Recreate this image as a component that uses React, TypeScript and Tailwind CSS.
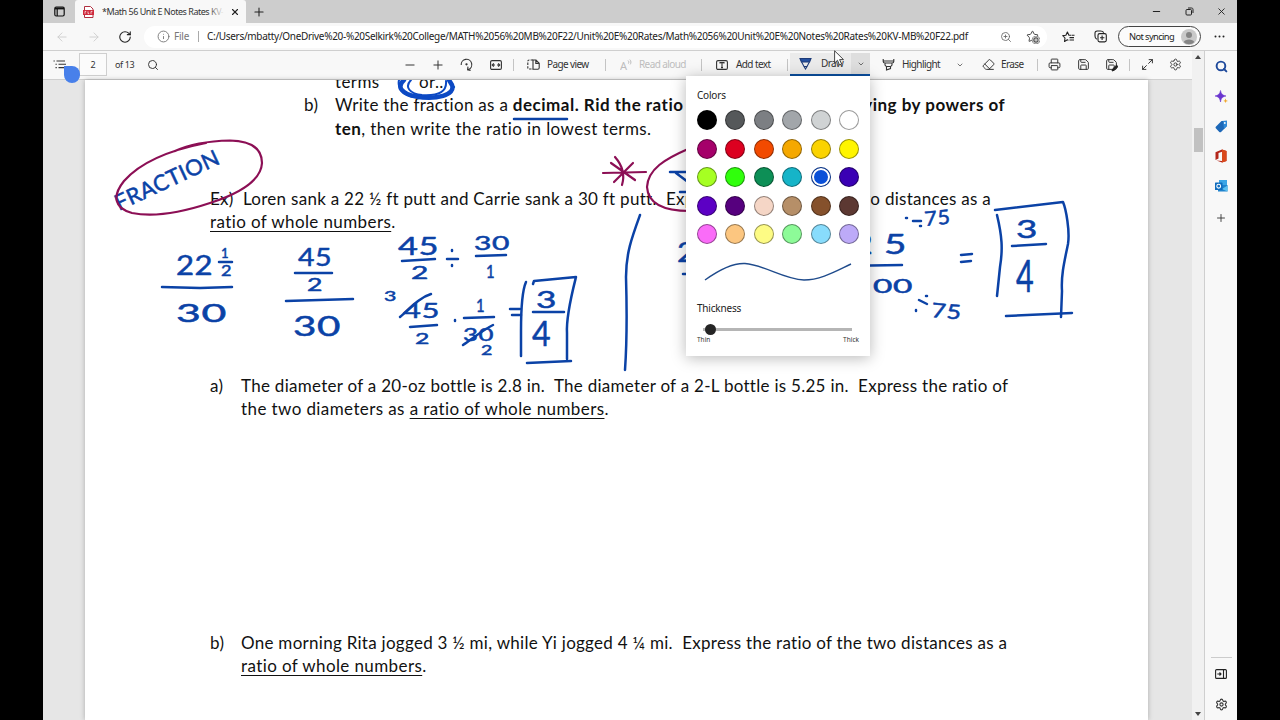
import { ReactNode } from "react";
import {
  ArrowLeft,
  ArrowRight,
  ChevronDown,
  CirclePlus,
  Eraser,
  Info,
  Maximize2,
  Minus,
  Plus,
  Printer,
  RotateCw,
  Save,
  Search,
  Settings,
  Star,
  X,
  ZoomIn,
} from "lucide-react";
import { clsx } from "clsx";

const UI = "font-['Noto_Sans','Open_Sans',sans-serif]";

const SWATCHES = [
  "bg-[#000000]", "bg-[#55585a]", "bg-[#7c7f83]", "bg-[#a2a6aa]", "bg-[#d0d3d4]", "bg-white",
  "bg-[#a5006a]", "bg-[#dc0020]", "bg-[#f24a00]", "bg-[#f5a800]", "bg-[#fbd300]", "bg-[#fff500]",
  "bg-[#a6ff22]", "bg-[#30ff0c]", "bg-[#0d8f56]", "bg-[#16b4c8]", "bg-[#0a50d8]", "bg-[#3a00b4]",
  "bg-[#5c00c4]", "bg-[#56007e]", "bg-[#f5d6c6]", "bg-[#b68f68]", "bg-[#85512c]", "bg-[#5c3832]",
  "bg-[#fa6cf8]", "bg-[#fcc680]", "bg-[#fdfb84]", "bg-[#8dfb98]", "bg-[#88dcfc]", "bg-[#bdaaf8]",
];
const SELECTED = 16;

interface InkText {
  t: string;
  x: number;
  y: number;
  w: number;
  size: number;
  rot?: number;
}

// handwritten numbers, baseline positions on the page canvas
const INK_TEXT: InkText[] = [
  { t: "FRACTION", x: 119, y: 210, w: 113, size: 22, rot: -25 },
  { t: "22", x: 176, y: 274, w: 37, size: 27 },
  { t: "1", x: 221, y: 257, w: 8, size: 13 },
  { t: "2", x: 221, y: 275, w: 11, size: 15 },
  { t: "30", x: 176, y: 321, w: 51, size: 25 },
  { t: "45", x: 298, y: 265, w: 34, size: 25 },
  { t: "2", x: 307, y: 290, w: 16, size: 18 },
  { t: "30", x: 293, y: 335, w: 48, size: 27 },
  { t: "45", x: 398, y: 254, w: 41, size: 25 },
  { t: "2", x: 411, y: 278, w: 18, size: 18 },
  { t: "30", x: 474, y: 249, w: 36, size: 20 },
  { t: "1", x: 486, y: 277, w: 9, size: 17 },
  { t: "3", x: 384, y: 300, w: 13, size: 13 },
  { t: "45", x: 403, y: 317, w: 37, size: 22 },
  { t: "2", x: 415, y: 343, w: 15, size: 16 },
  { t: "1", x: 476, y: 311, w: 9, size: 18 },
  { t: "30", x: 463, y: 340, w: 31, size: 18 },
  { t: "2", x: 481, y: 354, w: 12, size: 13 },
  { t: "3", x: 536, y: 307, w: 21, size: 24 },
  { t: "4", x: 532, y: 345, w: 19, size: 35 },
  { t: "2", x: 677, y: 261, w: 19, size: 26 },
  { t: "2", x: 855, y: 253, w: 18, size: 26 },
  { t: "5", x: 884, y: 253, w: 23, size: 27 },
  { t: "00", x: 873, y: 292, w: 40, size: 20 },
  { t: "75", x: 925, y: 225, w: 26, size: 20, rot: -5 },
  { t: "75", x: 931, y: 316, w: 30, size: 20, rot: 5 },
  { t: "3", x: 1016, y: 237, w: 22, size: 25 },
  { t: "4", x: 1016, y: 291, w: 18, size: 44 },
];

const INK_LINES = [
  "M219 261H232", "M162 286L200 287L232 286",
  "M295 272H332", "M286 300L353 298",
  "M402 260L435 258", "M447 258H458", "M452 249v1M452 264v1", "M476 255L506 254",
  "M400 316C410 308 418 297 431 293", "M410 326L437 324", "M455 319v1", "M464 317L494 316",
  "M463 344C472 338 483 329 493 324", "M510 308H520M512 314H521",
  "M526 281C522 290 521 310 521 330V355", "M533 283L534 280L576 276C572 292 566 315 567 332V358", "M527 362L571 360",
  "M533 311H564",
  "M640 214C632 236 626 252 626 276C627 310 627 340 625 369",
  "M670 171H688M676 172L688 181M680 191H688",
  "M683 273H700", "M840 265L902 264",
  "M906 217h1M913 220L921 220M920 225h1", "M926 295h1M916 310v-1M919 299L927 303",
  "M961 254L972 253M961 261L971 260",
  "M995 209L1063 201C1066 208 1070 230 1068 243C1064 262 1061 275 1062 290L1061 316",
  "M997 214C1002 235 1003 248 1000 266L997 295", "M1006 315L1072 312", "M1012 245L1046 243",
  "M514 118H567",
];

function Cell({ w, children }: { w: string; children: ReactNode }) {
  return <div className={clsx("flex h-full shrink-0 items-center justify-center", w)}>{children}</div>;
}

function Sep() {
  return (
    <Cell w="w-[6px]">
      <div className="h-[12px] w-px bg-[#c4c4c4]" />
    </Cell>
  );
}

function Label({ className, children }: { className: string; children: ReactNode }) {
  return <span className={clsx("shrink-0 whitespace-nowrap text-[10px] tracking-[-0.6px]", className)}>{children}</span>;
}

function PenIcon({ filled }: { filled?: boolean }) {
  return (
    <svg width="13" height="13" viewBox="0 0 13 13" fill="none" stroke={filled ? "#1d3b78" : "#333"} strokeWidth="1.1">
      {filled ? (
        <>
          <path d="M1 1.5H12L10.6 5H2.4Z" fill="#2450a0" />
          <path d="M2.6 5L5 9.5H8L10.4 5M5 9.5L6.5 12L8 9.5Z" />
        </>
      ) : (
        <path d="M1.2 1V3.5C1.2 4.5 2 5 3 5H10C11 5 11.8 4.5 11.8 3.5V1M1.5 3H11.5M3 5V7L4.3 8.5H8.7L10 7V5M4.5 8.5V12L8.5 10.5V8.5" />
      )}
    </svg>
  );
}

function TitleBar() {
  return (
    <div className="flex h-[23px] items-center bg-[#cdcdcd] text-[#222]">
      <Cell w="w-[32px]">
        <svg width="11" height="11" viewBox="0 0 11 11" fill="none" stroke="#111" strokeWidth="1.2">
          <rect x="0.8" y="1" width="9.4" height="9" rx="1.4" />
          <path d="M1 2.4H10" strokeWidth="2" />
          <path d="M3.2 2V10" />
        </svg>
      </Cell>
      <div className="flex h-full w-[171px] items-center rounded-t-[3px] bg-[#f8f8f8] pl-[8px]">
        <svg width="11" height="12" viewBox="0 0 11 12" className="shrink-0">
          <path d="M1.5 .5H7.5L10 3V11.5H1.5Z" fill="#fff" stroke="#b03040" />
          <rect x="0" y="4" width="11" height="5" fill="#cf2b3d" />
          <path d="M2 7.8V5.4H3.2M5 5.4V7.6H6.2M8 7.8V5.4H9.4" stroke="#fff" strokeWidth=".7" fill="none" />
        </svg>
        <div className="relative ml-[8px] h-[15px] w-[122px] overflow-hidden whitespace-nowrap text-[9px] leading-[15px] tracking-[-0.47px] text-[#333]">
          *Math 56 Unit E Notes Rates KV-
          <div className="absolute top-0 right-0 h-full w-[16px] bg-linear-to-r from-transparent to-[#f8f8f8]" />
        </div>
        <Cell w="w-[21px]">
          <X size={10} strokeWidth={2.6} />
        </Cell>
      </div>
      <Cell w="w-[25px]">
        <Plus size={14} strokeWidth={1.8} />
      </Cell>
      <div className="ml-auto flex h-full">
        <Cell w="w-[33px]">
          <Minus size={11} strokeWidth={2.2} />
        </Cell>
        <Cell w="w-[32px]">
          <svg width="9" height="9" viewBox="0 0 9 9" fill="none" stroke="#222" strokeWidth="1">
            <rect x="1" y="2.5" width="5.5" height="5.5" rx="1" />
            <path d="M3 1H6.5C7.5 1 8 1.5 8 2.5V6" />
          </svg>
        </Cell>
        <Cell w="w-[32px]">
          <X size={11} strokeWidth={2} />
        </Cell>
      </div>
    </div>
  );
}

function AddressBar() {
  return (
    <div className="flex h-[27px] items-center bg-[#f8f8f8] text-[#222]">
      <Cell w="w-[37px]">
        <ArrowLeft size={14} strokeWidth={1.6} className="text-[#cfcfcf]" />
      </Cell>
      <Cell w="w-[27px]">
        <ArrowRight size={14} strokeWidth={1.6} className="text-[#cfcfcf]" />
      </Cell>
      <Cell w="w-[35px]">
        <RotateCw size={14} strokeWidth={1.9} />
      </Cell>
      <div className="ml-[2px] flex h-[22px] w-[903px] items-center rounded-full bg-white">
        <Cell w="w-[38px]">
          <Info size={13} strokeWidth={1.7} className="text-[#777]" />
        </Cell>
        <Label className="-ml-[8px] w-[21px] text-[#777] tracking-[-0.2px]!">File</Label>
        <div className="ml-[3px] h-[11px] w-px bg-[#aaa]" />
        <span className="ml-[8px] w-[786px] shrink-0 text-[10px] tracking-[-0.31px] whitespace-nowrap">
          C:/Users/mbatty/OneDrive%20-%20Selkirk%20College/MATH%2056%20MB%20F22/Unit%20E%20Rates/Math%2056%20Unit%20E%20Notes%20Rates%20KV-MB%20F22.pdf
        </span>
        <Cell w="w-[26px]">
          <ZoomIn size={12} strokeWidth={1.7} className="text-[#666]" />
        </Cell>
        <div className="relative flex w-[26px] items-center justify-center">
          <Star size={13} strokeWidth={1.8} className="text-[#444]" />
          <CirclePlus size={8} strokeWidth={2.4} className="absolute right-[5px] bottom-[-1px] rounded-full bg-[#555] text-white" />
        </div>
      </div>
      <Cell w="w-[42px]">
        <svg width="13" height="12" viewBox="0 0 13 12" fill="none" stroke="#222" strokeWidth="1.1" strokeLinejoin="round">
          <path d="M9 4.2H6.9L5.4 1L3.9 4.2L.8 4.6L3 7L2.5 10.5L5.4 8.8L6.4 9.4M7.5 6.6H12M9.5 4.2H12.5M7.5 9H12" />
        </svg>
      </Cell>
      <Cell w="w-[22px]">
        <svg width="13" height="13" viewBox="0 0 13 13" fill="none" stroke="#222" strokeWidth="1.1">
          <rect x="4" y="3.6" width="8.3" height="8.3" rx="1.6" />
          <path d="M2.8 9.3C1.4 8.6 1 7.5 1 6V3.2C1 1.8 1.8 1 3.2 1H6.5C8 1 9 1.4 9.8 2.6M8.1 5.5V10M6 7.8H10.4" />
        </svg>
      </Cell>
      <div className="ml-[7px] flex h-[21px] w-[83px] items-center justify-between rounded-full border border-[#444] bg-[#fbfbfb] pr-[3px] pl-[10px]">
        <span className="text-[9.3px] tracking-[-0.6px] whitespace-nowrap">Not syncing</span>
        <svg width="16" height="16" viewBox="0 0 16 16" className="shrink-0">
          <circle cx="8" cy="8" r="8" fill="#c9c9c9" />
          <circle cx="8" cy="6" r="3" fill="#858585" />
          <path d="M2.8 13C3.5 9.5 12.5 9.5 13.2 13C11 16 5 16 2.8 13Z" fill="#858585" />
        </svg>
      </div>
      <Cell w="w-[36px]">
        <svg width="11" height="3" viewBox="0 0 11 3" fill="#222">
          <circle cx="1.5" cy="1.5" r="1" />
          <circle cx="5.5" cy="1.5" r="1" />
          <circle cx="9.5" cy="1.5" r="1" />
        </svg>
      </Cell>
    </div>
  );
}

function PdfToolbar() {
  return (
    <div className="flex h-[29px] items-center border-b border-[#cfcfcf] bg-[#f8f8f8] text-[#333]">
      <Cell w="w-[32px]">
        <svg width="13" height="9" viewBox="0 0 13 9" stroke="#333" strokeWidth="1.1">
          <path d="M3.5 1H12M5.5 4.3H13M5.5 7.6H12M.5 1H1.8M2.5 4.3H3.8M2.5 7.6H3.8" />
        </svg>
      </Cell>
      <div className="ml-[4px] flex h-[23px] w-[28px] items-center justify-center border border-[#cfcfcf] bg-[#fbfbfb] text-[9px]">2</div>
      <span className="ml-[8px] w-[24px] text-[9px] tracking-[-0.4px] whitespace-nowrap">of 13</span>
      <Cell w="w-[28px]">
        <Search size={12} strokeWidth={1.9} />
      </Cell>
      <div className="w-[229px]" />
      <Cell w="w-[28px]">
        <Minus size={14} strokeWidth={1.7} />
      </Cell>
      <Cell w="w-[28px]">
        <Plus size={14} strokeWidth={1.7} />
      </Cell>
      <Cell w="w-[29px]">
        <svg width="13" height="13" viewBox="0 0 13 13" fill="none" stroke="#333" strokeWidth="1.1">
          <path d="M1.2 7A5.3 5.3 0 1 1 8.2 11.6M8 8.6L7.6 11.8L10.6 12.4" />
          <circle cx="6.5" cy="6.3" r=".6" fill="#333" />
        </svg>
      </Cell>
      <Cell w="w-[29px]">
        <svg width="12" height="10" viewBox="0 0 12 10" fill="none" stroke="#333" strokeWidth="1.1">
          <rect x=".6" y=".6" width="10.8" height="8.8" rx="1.4" />
          <path d="M2.2 5H5M7 5H9.8M3.8 3.4L2.2 5L3.8 6.6M8.2 3.4L9.8 5L8.2 6.6" />
        </svg>
      </Cell>
      <Sep />
      <div className="w-[3px]" />
      <Cell w="w-[28px]">
        <svg width="13" height="11" viewBox="0 0 13 11" fill="none" stroke="#333" strokeWidth="1.1">
          <path d="M6 1H2.2C1.2 1 .8 1.5 .8 2.2V8.6C.8 9.5 1.2 10 2.2 10H6" strokeDasharray="2.4 1.2" />
          <path d="M6 .6V10.2H10.8C11.8 10.2 12.2 9.6 12.2 8.8V4.2L9 1H6M8.8 1V4.4H12" />
        </svg>
      </Cell>
      <Label className="w-[55px]">Page view</Label>
      <Sep />
      <div className="w-[5px]" />
      <Cell w="w-[26px]">
        <svg width="12" height="12" viewBox="0 0 12 12" fill="none" stroke="#bdbdbd" strokeWidth="1">
          <path d="M8 1.5C9 2.2 9 3.6 8.4 4.6M9.8 .6C11.3 2 11.2 4 10.2 5.4" />
          <text x="0" y="11" fontSize="11" fill="#bdbdbd" stroke="none">A</text>
        </svg>
      </Cell>
      <Label className="w-[59px] text-[#bdbdbd]">Read aloud</Label>
      <Sep />
      <div className="w-[4px]" />
      <Cell w="w-[28px]">
        <svg width="12" height="10" viewBox="0 0 12 10" fill="none" stroke="#333" strokeWidth="1.1">
          <rect x=".6" y=".6" width="10.8" height="8.8" rx="1.4" />
          <path d="M4 3.6V2.6H8V3.6M6 2.6V7.6M5 7.6H7" />
        </svg>
      </Cell>
      <Label className="w-[48px]">Add text</Label>
      <Sep />
      <div className="flex h-[23px] w-[80px] items-center border-b-2 border-[#0b4fa0] bg-[#ebebeb]">
        <Cell w="w-[31px]">
          <PenIcon filled />
        </Cell>
        <Label className="w-[30px]">Draw</Label>
        <div className="flex h-full w-[19px] items-center justify-center bg-[#dedede]">
          <ChevronDown size={8} strokeWidth={2} />
        </div>
      </div>
      <div className="w-[4px]" />
      <Cell w="w-[28px]">
        <PenIcon />
      </Cell>
      <Label className="w-[48px]">Highlight</Label>
      <Cell w="w-[20px]">
        <ChevronDown size={8} strokeWidth={2} />
      </Cell>
      <div className="w-[5px]" />
      <Cell w="w-[26px]">
        <Eraser size={13} strokeWidth={1.8} />
      </Cell>
      <Label className="w-[33px]">Erase</Label>
      <Sep />
      <Cell w="w-[29px]">
        <Printer size={13} strokeWidth={1.8} />
      </Cell>
      <Cell w="w-[28px]">
        <Save size={13} strokeWidth={1.8} />
      </Cell>
      <div className="relative flex w-[29px] items-center justify-center">
        <Save size={13} strokeWidth={1.8} />
        <svg width="8" height="8" viewBox="0 0 8 8" className="absolute right-[7px] bottom-[-1px]">
          <path d="M1 7L1.8 4.8L5.5 1.2L7 2.6L3.2 6.3Z" fill="#222" stroke="#222" />
        </svg>
      </div>
      <Sep />
      <Cell w="w-[30px]">
        <Maximize2 size={13} strokeWidth={1.8} />
      </Cell>
      <Cell w="w-[26px]">
        <Settings size={13} strokeWidth={1.7} />
      </Cell>
    </div>
  );
}

function Ink() {
  return (
    <svg className="absolute top-0 left-0" width="1063" height="641" viewBox="85 79 1063 641" fill="none" strokeLinecap="round" strokeLinejoin="round" overflow="visible">
      <g stroke="#0b42a6" strokeWidth="2.5">
        {INK_LINES.map((d) => (
          <path key={d} d={d} />
        ))}
      </g>
      <g stroke="#0c49c4" strokeWidth="3">
        <path d="M404 79C396 86 402 93 416 95.500C436 99 456 94 452 84L449 79" strokeWidth="4.5" />
        <path d="M411 79C404 86 410 93 422 94C440 95 447 90 446 80" strokeWidth="2" />
        <path d="M399 79C397 87 404 94 413 96" strokeWidth="2" />
      </g>
      <g fill="#0b42a6" stroke="#0b42a6" strokeWidth=".5" fontFamily="Lato, sans-serif">
        {INK_TEXT.map((n, i) => (
          <text
            key={i}
            x={n.x}
            y={n.y}
            fontSize={n.size}
            textLength={n.w}
            lengthAdjust="spacingAndGlyphs"
            transform={n.rot ? `rotate(${n.rot} ${n.x} ${n.y})` : undefined}
          >
            {n.t}
          </text>
        ))}
      </g>
      <g stroke="#8c0f55" strokeWidth="2.2">
        <path d="M175 150C190 143 210 140 230 139.500C252 140 262 148 262 162C261 180 238 193 210 202C180 212 152 216 132 212C114 207 112 195 124 180C138 164 165 150 206 142" />
        <path d="M603 172L646 171M615 156C622 164 625 174 622 184M611 162L635 179M633 162L614 181" />
        <path d="M688 148C665 158 648 168 647 186C648 202 663 210 690 210" />
      </g>
    </svg>
  );
}

function DocumentPage() {
  return (
    <div className="relative ml-[42px] h-[641px] w-[1063px] overflow-hidden bg-white font-['Lato',sans-serif] text-[17px] leading-[23.5px] tracking-[0.4px] whitespace-pre text-[#111] shadow-[0_0_5px_rgba(0,0,0,0.25)]">
      <div className="-mt-[9.5px] flex pl-[250px]">
        <span className="w-[84px]">terms</span>
        <span>or..</span>
        <span className="ml-[8px]">.</span>
      </div>
      <div className="-mt-[0.5px] flex pl-[219px]">
        <span className="w-[31px]">b)</span>
        <div>
          <p className="tracking-[0.3px]">
            Write the fraction as a <b className="tracking-[0.5px]">decimal. Rid the ratio of decimals by multiplying by powers of</b>
          </p>
          <p>
            <b>ten</b>, then write the ratio in lowest terms.
          </p>
        </div>
      </div>
      <div className="mt-[46.5px] pl-[125px]">
        <p className="tracking-[0.28px]">Ex)  Loren sank a 22 ½ ft putt and Carrie sank a 30 ft putt.  Express the ratio of the two distances as a</p>
        <p>
          <span className="underline underline-offset-[3px]">ratio of whole numbers</span>.
        </p>
      </div>
      <div className="mt-[140px] flex pl-[125px]">
        <span className="w-[31px]">a)</span>
        <div>
          <p className="tracking-[0.28px]">The diameter of a 20-oz bottle is 2.8 in.  The diameter of a 2-L bottle is 5.25 in.  Express the ratio of</p>
          <p>
            the two diameters as <span className="underline underline-offset-[3px]">a ratio of whole numbers</span>.
          </p>
        </div>
      </div>
      <div className="mt-[210px] flex pl-[125px]">
        <span className="w-[31px]">b)</span>
        <div>
          <p className="tracking-[0.28px]">One morning Rita jogged 3 ½ mi, while Yi jogged 4 ¼ mi.  Express the ratio of the two distances as a</p>
          <p>
            <span className="underline underline-offset-[3px]">ratio of whole numbers</span>.
          </p>
        </div>
      </div>
      <Ink />
    </div>
  );
}

function DrawMenu() {
  return (
    <div className="absolute top-[76px] left-[686px] h-[280px] w-[184px] bg-white px-[11px] pt-[12px] shadow-[0_2px_14px_rgba(0,0,0,0.28)]">
      <div className="text-[10px] leading-[14px] tracking-[-0.2px] text-[#222]">Colors</div>
      <div className="mt-[8px] grid w-[162px] grid-cols-6 gap-x-[8.4px] gap-y-[8.5px]">
        {SWATCHES.map((color, i) => (
          <div
            key={color}
            className={clsx(
              "h-[20px] w-[20px] rounded-full border border-black/40",
              color,
              i === SELECTED && "border-[#2d5fa8] shadow-[inset_0_0_0_2px_white]"
            )}
          />
        ))}
      </div>
      <svg width="162" height="22" viewBox="0 0 162 22" className="mt-[17px]" fill="none" stroke="#1f4b8c" strokeWidth="1.4">
        <path d="M8 19C26 6 38 2 48 2.500C68 4 86 18 107 19C124 19 139 10 154 3" />
      </svg>
      <div className="mt-[18px] text-[10px] leading-[14px] tracking-[-0.2px] text-[#222]">Thickness</div>
      <div className="relative mt-[13px] ml-[6px] h-[3px] w-[149px] bg-[#b5b5b5]">
        <div className="absolute top-[-4px] left-[2px] h-[11px] w-[11px] rounded-full bg-[#252525]" />
      </div>
      <div className="mt-[4px] flex w-[162px] justify-between text-[6.5px] leading-[9px] text-[#333]">
        <span>Thin</span>
        <span>Thick</span>
      </div>
    </div>
  );
}

function Sidebar() {
  return (
    <div className="flex w-[33px] flex-col items-center border-l border-[#cfcfcf] bg-[#f8f8f8]">
      <Cell w="h-[30px]! w-full">
        <Search size={13} strokeWidth={3.6} className="text-[#1f4a9c]" />
      </Cell>
      <Cell w="h-[30px]! w-full">
        <svg width="13" height="13" viewBox="0 0 13 13">
          <path d="M5.500 .5C6.200 4 7.500 5.300 11 6C7.500 6.700 6.200 8 5.500 12C4.800 8 3.500 6.700 0 6C3.500 5.300 4.800 4 5.500 .5Z" fill="#6a35cf" stroke="#6a35cf" strokeWidth=".6" />
          <path d="M10.500 8.500L11.200 10.200L13 10.900L11.200 11.500L10.500 13L9.800 11.500L8.300 10.900L9.800 10.200Z" fill="#f0a830" />
        </svg>
      </Cell>
      <Cell w="h-[30px]! w-full">
        <svg width="13" height="13" viewBox="0 0 13 13">
          <path d="M6.500 1L12 .8V6L6 12C5.500 12.500 4.800 12.300 4.300 11.900L.8 8.200C.4 7.700 .4 7.200 .8 6.800Z" fill="#1d68b8" />
          <path d="M8 .9L12 .8V6L9 9Z" fill="#2f8ad8" />
          <circle cx="9.800" cy="3" r=".9" fill="#fff" />
        </svg>
      </Cell>
      <Cell w="h-[30px]! w-full">
        <svg width="12" height="14" viewBox="0 0 12 14">
          <path d="M7 .5L11.500 2V12L7 13.500L1.500 11.500L7 12V2.800L3.500 4V9.500L.5 11V3.200Z" fill="#b3261a" />
          <path d="M7 .5L11.500 2V12L7 13.500Z" fill="#d9481c" />
        </svg>
      </Cell>
      <Cell w="h-[30px]! w-full">
        <svg width="13" height="12" viewBox="0 0 13 12">
          <rect x="4" y="0" width="8" height="8" fill="#3aa5e6" />
          <path d="M3 5L12.500 5V11.500H3Z" fill="#1f83cd" />
          <path d="M12.500 5.500L7 9L12.500 11.500Z" fill="#5cc2f2" />
          <rect x="0" y="2.500" width="7.500" height="7.500" rx=".6" fill="#0f6cbd" />
          <circle cx="3.700" cy="6.200" r="1.900" fill="none" stroke="#fff" strokeWidth="1.100" />
        </svg>
      </Cell>
      <Cell w="h-[34px]! w-full">
        <Plus size={12} strokeWidth={1.8} className="text-[#333]" />
      </Cell>
      <div className="mt-auto h-px w-[21px] bg-[#cccccc]" />
      <Cell w="h-[32px]! w-full">
        <svg width="12" height="10" viewBox="0 0 12 10" fill="none" stroke="#222" strokeWidth="1.1">
          <rect x=".6" y=".6" width="10.8" height="8.800" rx="1" />
          <path d="M8.500 .6V9.400M2.300 5H6M4.500 3.500L6 5L4.500 6.500" />
        </svg>
      </Cell>
      <Cell w="h-[28px]! mb-[2px] w-full">
        <Settings size={13} strokeWidth={2} className="text-[#333]" />
      </Cell>
    </div>
  );
}

export default function App() {
  return (
    <div className={clsx("relative h-[720px] w-[1280px] overflow-hidden bg-black", UI)}>
      <div className="ml-[43px] flex h-full w-[1194px] flex-col bg-[#e6e6e6]">
        <TitleBar />
        <AddressBar />
        <div className="flex min-h-0 flex-1 border-t border-[#cfcfcf]">
          <div className="flex w-[1149px] flex-col overflow-hidden">
            <PdfToolbar />
            <DocumentPage />
          </div>
          <div className="flex w-[12px] flex-col items-center justify-between bg-[#f1f1f1] py-[4px]">
            <div className="h-0 w-0 border-x-[3px] border-b-[4px] border-x-transparent border-b-[#444]" />
            <div className="mt-[69px] mb-auto h-[24px] w-[9px] bg-[#c1c1c1]" />
            <div className="h-0 w-0 border-x-[3px] border-t-[4px] border-x-transparent border-t-[#444]" />
          </div>
          <Sidebar />
        </div>
      </div>
      <DrawMenu />
      <div className="absolute top-[66px] left-[64px] h-[17px] w-[16px] rounded-full rounded-tl-none bg-[#4880ea]" />
      <svg className="absolute top-[50px] left-[834px]" width="11" height="17" viewBox="0 0 11 17">
        <path d="M.6 .8V13L3.500 10.300L5.500 15L7.600 14L5.600 9.600H9.500Z" fill="#fff" stroke="#333" strokeWidth=".9" />
      </svg>
    </div>
  );
}
